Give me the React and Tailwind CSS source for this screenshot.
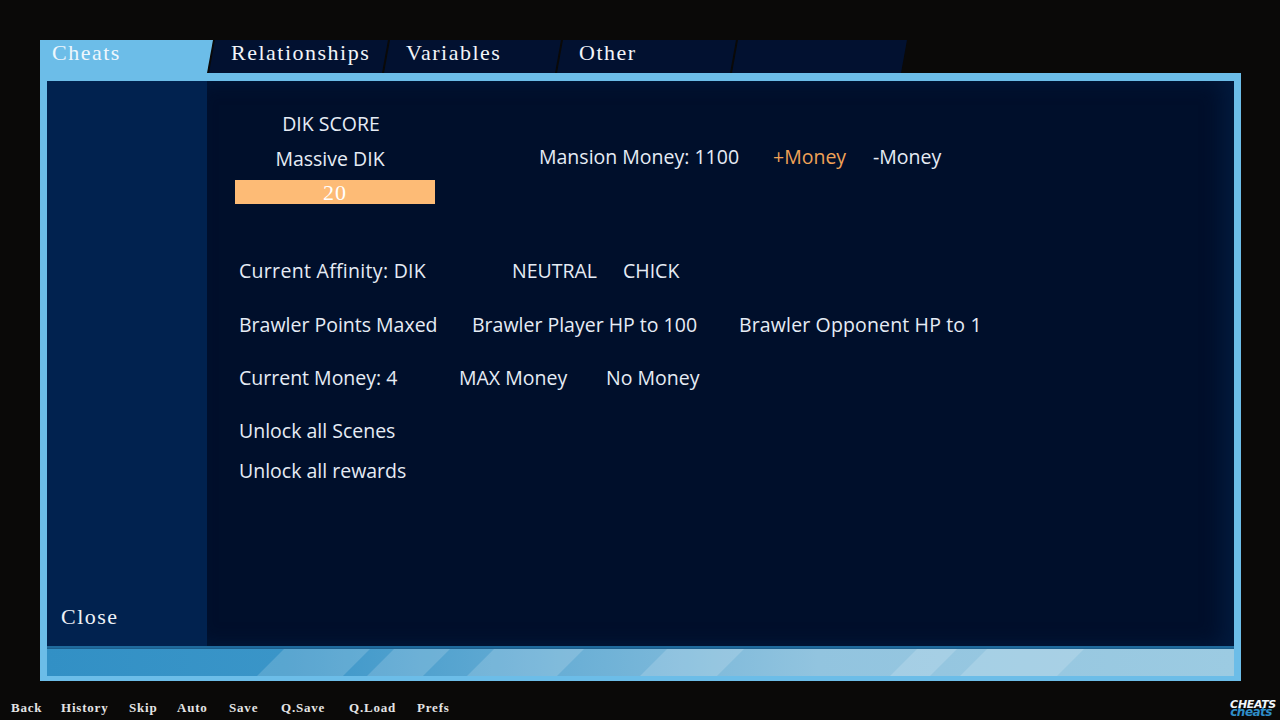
// App.jsx - game cheat menu screen
const serif = "font-['Liberation_Serif',serif]";
const sans = "font-['Open_Sans',sans-serif]";

const tabs = [
  { label: "Relationships", w: "w-[179px]" },
  { label: "Variables", w: "w-[177px]" },
  { label: "Other", w: "w-[179px]" },
  { label: "", w: "w-[175px]" },
];

const navItems = [
  { label: "Back", w: "w-[50px]" },
  { label: "History", w: "w-[68px]" },
  { label: "Skip", w: "w-[48px]" },
  { label: "Auto", w: "w-[52px]" },
  { label: "Save", w: "w-[52px]" },
  { label: "Q.Save", w: "w-[68px]" },
  { label: "Q.Load", w: "w-[68px]" },
  { label: "Prefs", w: "w-[60px]" },
];

const stripes = [
  [210, 86],
  [320, 56],
  [420, 90],
  [593, 77],
  [843, 40],
  [913, 97],
];

const BottomBar = () => (
  <svg width="1187" height="28" viewBox="0 0 1187 28" className="block">
    <defs>
      <linearGradient id="barGrad" x1="0" x2="1" y1="0" y2="0">
        <stop offset="0" stopColor="#3290c5" />
        <stop offset="0.2" stopColor="#3a95c8" />
        <stop offset="0.45" stopColor="#6cb0d6" />
        <stop offset="0.65" stopColor="#92c4df" />
        <stop offset="1" stopColor="#9ccbe2" />
      </linearGradient>
    </defs>
    <rect width="1187" height="28" fill="url(#barGrad)" />
    {stripes.map(([x, w], i) => (
      <polygon
        key={i}
        points={`${x + 28},0 ${x + 28 + w},0 ${x + w},28 ${x},28`}
        fill="#ffffff"
        opacity="0.16"
      />
    ))}
    <rect width="1187" height="1" fill="#1c5f8c" />
  </svg>
);

export default function App() {
  return (
    <div className="w-[1280px] h-[720px] bg-[#0a0908] overflow-hidden flex flex-col pt-[40px]">
      {/* Tabs */}
      <div className={`flex h-[33px] ml-[40px] ${serif} text-[22px] tracking-[1.5px]`}>
        <div className="w-[173px] h-full bg-[#6cbde8] text-[#eef7fd] pl-[12px] leading-[26px] [clip-path:polygon(0_0,100%_0,calc(100%-6px)_100%,0_100%)]">
          Cheats
        </div>
        {tabs.map((t, i) => (
          <div
            key={i}
            className={`${t.w} h-full -ml-[4px] bg-[#021130] text-[#f2f5f9] pl-[22px] leading-[26px] [clip-path:polygon(6px_0,100%_0,calc(100%-6px)_100%,0_100%)]`}
          >
            {t.label}
          </div>
        ))}
      </div>

      {/* Frame */}
      <div className="ml-[40px] w-[1201px] h-[608px] bg-[#6cbde8] pt-[8px] px-[7px] pb-[5px] flex flex-col">
        <div className="h-[565px] flex shadow-[inset_0_0_0_1px_#0b3a66]">
          {/* Sidebar */}
          <div className="w-[160px] bg-[#01224f] flex flex-col justify-end pl-[14px] pb-[15px]">
            <div className={`${serif} text-[22px] tracking-[1.5px] text-[#eef2f7] leading-[28px]`}>Close</div>
          </div>

          {/* Main */}
          <div className={`flex-1 bg-[#000f2b] ${sans} text-[19.5px] text-[#e6ecf5] leading-[26px] pl-[32px] pt-[30px] shadow-[inset_-12px_0_20px_#021a3d]`}>
            <div className="flex">
              <div className="w-[200px] -ml-[4px] flex flex-col items-center">
                <div className="pr-[8px]">DIK SCORE</div>
                <div className="mt-[9px] pr-[10px]">Massive DIK</div>
                <div className={`mt-[8px] w-[200px] h-[24px] bg-[#fdbb76] text-white text-center ${serif} text-[22px] leading-[26px] tracking-[1px]`}>
                  20
                </div>
              </div>
              <div className="ml-[104px] mt-[33px] flex">
                <span className="w-[234px]">Mansion Money: 1100</span>
                <span className="w-[100px] text-[#f0a257]">+Money</span>
                <span>-Money</span>
              </div>
            </div>

            <div className="flex mt-[54px]">
              <span className="w-[273px] tracking-[0.3px]">Current Affinity: DIK</span>
              <span className="w-[111px]">NEUTRAL</span>
              <span>CHICK</span>
            </div>

            <div className="flex mt-[28px]">
              <span className="w-[233px]">Brawler Points Maxed</span>
              <span className="w-[267px]">Brawler Player HP to 100</span>
              <span className="tracking-[0.15px]">Brawler Opponent HP to 1</span>
            </div>

            <div className="flex mt-[27px]">
              <span className="w-[220px]">Current Money: 4</span>
              <span className="w-[147px]">MAX Money</span>
              <span>No Money</span>
            </div>

            <div className="mt-[27px]">Unlock all Scenes</div>
            <div className="mt-[14px]">Unlock all rewards</div>
          </div>
        </div>
        <div className="h-[2px] bg-[#1f6a9c]" />
        <BottomBar />
      </div>

      {/* Quick menu */}
      <div className={`h-[39px] flex items-center pt-[14px] pl-[11px] ${serif} text-[13px] tracking-[0.8px] font-bold text-[#e4e4e4]`}>
        {navItems.map((n) => (
          <span key={n.label} className={n.w}>
            {n.label}
          </span>
        ))}
        <div className="ml-auto mr-[2px] relative w-[50px] h-[22px]">
          <span className="absolute right-[6px] top-[8px] font-['DejaVu_Sans',sans-serif] italic font-bold text-[12px] tracking-[-0.5px] text-[#2f8ec9] leading-[14px]">
            cheats
          </span>
          <span className="absolute right-[2px] top-[1px] font-['DejaVu_Sans',sans-serif] italic font-bold text-[11px] tracking-[-0.3px] text-[#f2f6fa] leading-[14px]">
            CHEATS
          </span>
        </div>
      </div>
    </div>
  );
}
